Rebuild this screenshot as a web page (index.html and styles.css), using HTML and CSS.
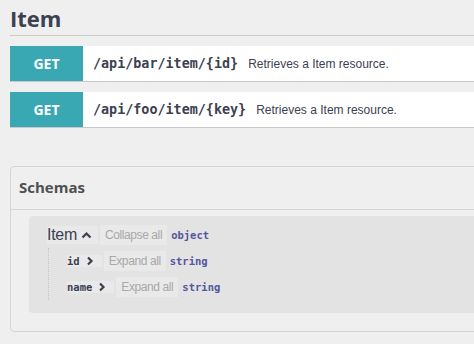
FILE: index.html
```html
<!DOCTYPE html>
<html lang="en">

<head>
    <meta charset="UTF-8">
    <meta name="viewport" content="width=device-width, initial-scale=1.0">
    <title>Item</title>
    <link rel="stylesheet" href="styles.css">
</head>

<body>
    <div class="page">
        <h2 class="tag-title">Item</h2>

        <div class="op">
            <span class="method">GET</span>
            <span class="path">/api/bar/item/{id}</span>
            <span class="summary">Retrieves a Item resource.</span>
        </div>
        <div class="op">
            <span class="method">GET</span>
            <span class="path">/api/foo/item/{key}</span>
            <span class="summary">Retrieves a Item resource.</span>
        </div>

        <section class="schemas">
            <h4 class="schemas-title">Schemas</h4>
            <div class="schemas-body">
                <div class="model">
                    <div class="model-row">
                        <span class="model-name">Item
                            <svg class="chev" width="11" height="8" viewBox="0 0 11 8">
                                <path d="M1.5 6.5 L5.5 2.5 L9.5 6.5" fill="none" stroke="#3b4151" stroke-width="2.2" />
                            </svg>
                        </span>
                        <span class="toggle">Collapse all</span>
                        <span class="type">object</span>
                    </div>
                    <div class="props">
                        <div class="model-row">
                            <span class="prop-name">id
                                <svg class="chev" width="8" height="10" viewBox="0 0 8 10">
                                    <path d="M2 1.5 L5.5 5 L2 8.5" fill="none" stroke="#3b4151" stroke-width="2.2" />
                                </svg>
                            </span>
                            <span class="toggle">Expand all</span>
                            <span class="type">string</span>
                        </div>
                        <div class="model-row">
                            <span class="prop-name">name
                                <svg class="chev" width="8" height="10" viewBox="0 0 8 10">
                                    <path d="M2 1.5 L5.5 5 L2 8.5" fill="none" stroke="#3b4151" stroke-width="2.2" />
                                </svg>
                            </span>
                            <span class="toggle">Expand all</span>
                            <span class="type">string</span>
                        </div>
                    </div>
                </div>
            </div>
        </section>
    </div>
</body>

</html>
```

FILE: styles.css
```css
body {
    margin: 0;
    background-color: #efefef;
    font-family: "Liberation Sans", Arial, sans-serif;
    color: #3b4151;
    overflow: hidden;
}

.page {
    padding-left: 10px;
    margin-right: -30px;
}

.tag-title {
    margin: 0;
    height: 35px;
    line-height: 36px;
    font-family: "Open Sans", sans-serif;
    font-size: 22px;
    font-weight: 700;
    color: #3b4151;
    border-bottom: 1px solid #cbcbcb;
}

/* operations */
.op {
    display: flex;
    align-items: center;
    height: 35px;
    margin-top: 10px;
    background-color: #ffffff;
    border-bottom: 1px solid #c9c9c9;
}

.method {
    width: 73px;
    height: 100%;
    display: flex;
    align-items: center;
    justify-content: center;
    background-color: #3aa8b3;
    color: #ffffff;
    font-family: "Open Sans", sans-serif;
    font-size: 14px;
    font-weight: 700;
}

.path {
    margin-left: 10px;
    font-family: "DejaVu Sans Mono", monospace;
    font-size: 13.4px;
    font-weight: 700;
    color: #3b4151;
}

.summary {
    margin-left: 10px;
    font-size: 12px;
    color: #3b4151;
}

/* schemas */
.schemas {
    margin-top: 38px;
    border: 1px solid #d4d4d4;
    border-radius: 4px;
    padding-bottom: 18px;
}

.schemas-title {
    margin: 0;
    height: 42px;
    line-height: 40px;
    padding-left: 8px;
    font-family: "Open Sans", sans-serif;
    font-size: 15px;
    font-weight: 700;
    color: #505050;
    border-bottom: 1px solid #d4d4d4;
}

.schemas-body {
    margin: 6px 0 0 18px;
    background-color: #e3e3e3;
    border-radius: 4px 0 0 4px;
    padding: 6px 0 13px 18px;
}

.model-row {
    display: flex;
    align-items: center;
    height: 26px;
}

.model-name {
    display: flex;
    align-items: center;
    gap: 4px;
    font-size: 16px;
    color: #3b4151;
    padding-right: 6px;
    background-color: #e9e9e9;
    letter-spacing: -0.3px;
}

.chev {
    display: block;
}

.toggle {
    font-size: 12px;
    letter-spacing: -0.4px;
    color: #a8a8a8;
    padding: 3px 5px;
    background-color: #e9e9e9;
    margin-left: 2px;
}

.type {
    margin-left: 4px;
    font-family: "DejaVu Sans Mono", monospace;
    font-size: 10.5px;
    font-weight: 700;
    color: #55569c;
}

.props {
    margin-left: 1px;
    padding-left: 18px;
    border-left: 1px dotted #c4c4c4;
}

.prop-name {
    display: flex;
    align-items: center;
    gap: 6px;
    font-family: "DejaVu Sans Mono", monospace;
    font-size: 10.5px;
    font-weight: 700;
    color: #3b4151;
    padding-right: 8px;
    background-color: #e9e9e9;
}
```
